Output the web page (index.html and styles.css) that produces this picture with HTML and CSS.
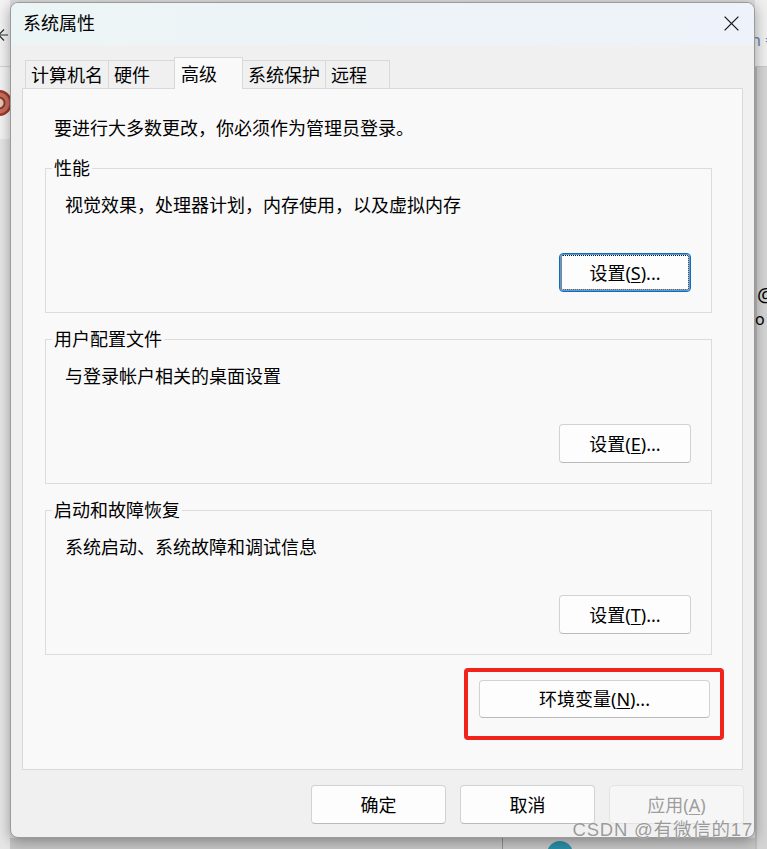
FILE: index.html
```html
<!DOCTYPE html>
<html lang="zh-CN">
<head>
<meta charset="utf-8">
<title>系统属性</title>
<link rel="stylesheet" href="styles.css">
</head>
<body>
<div class="desk">
  <div class="desk-left">
    <div class="dl-top">
      <svg class="dl-back" width="10" height="14" viewBox="0 0 10 14"><path d="M6 1.5 L0.8 7 L6 12.5 M0.8 7 H10" fill="none" stroke="#2b2b2b" stroke-width="1.2"/></svg>
    </div>
    <div class="dl-mid"><span class="avatar"></span></div>
    <div class="dl-rest"></div>
  </div>
  <div class="desk-center">
    <div class="dc-fill"></div>
    <div class="dc-bottom"><span class="dc-split"></span><span class="teal"></span></div>
  </div>
  <div class="desk-right">
    <div class="dr-top"><span class="dr-n">n =</span></div>
    <div class="dr-rest"><span class="dr-at">@</span><span class="dr-o">o</span></div>
  </div>
</div>

<div class="dialog">
  <div class="titlebar">
    <span class="title">系统属性</span>
    <svg class="close" width="15" height="15" viewBox="0 0 15 15"><path d="M0.6 0.6 L14.4 14.4 M14.4 0.6 L0.6 14.4" fill="none" stroke="#1c1c1c" stroke-width="1.3"/></svg>
  </div>

  <div class="tabs">
    <div class="tab first">计算机名</div>
    <div class="tab">硬件</div>
    <div class="tab active">高级</div>
    <div class="tab">系统保护</div>
    <div class="tab last">远程</div>
  </div>

  <div class="panel">
    <p class="intro">要进行大多数更改，你必须作为管理员登录。</p>

    <fieldset class="group">
      <legend>性能</legend>
      <div class="group-body">
        <p class="desc">视觉效果，处理器计划，内存使用，以及虚拟内存</p>
        <div class="btn-row"><button class="btn focus">设置(<u>S</u>)...</button></div>
      </div>
    </fieldset>

    <fieldset class="group">
      <legend>用户配置文件</legend>
      <div class="group-body">
        <p class="desc">与登录帐户相关的桌面设置</p>
        <div class="btn-row"><button class="btn">设置(<u>E</u>)...</button></div>
      </div>
    </fieldset>

    <fieldset class="group">
      <legend>启动和故障恢复</legend>
      <div class="group-body">
        <p class="desc">系统启动、系统故障和调试信息</p>
        <div class="btn-row"><button class="btn">设置(<u>T</u>)...</button></div>
      </div>
    </fieldset>

    <div class="env-row">
      <div class="annot"><button class="btn wide">环境变量(<u>N</u>)...</button></div>
    </div>
  </div>

  <div class="footer">
    <button class="btn foot">确定</button>
    <button class="btn foot">取消</button>
    <button class="btn foot disabled">应用(<u>A</u>)</button>
  </div>
</div>

<div class="watermark">CSDN @有微信的17</div>
</body>
</html>
```

FILE: styles.css
```css
html, body {
  margin: 0;
  padding: 0;
}

body {
  width: 767px;
  height: 849px;
  overflow: hidden;
  position: relative;
  font-family: "Noto Sans", "Noto Sans CJK SC", sans-serif;
  color: #000;
}

/* ---------- desktop behind the dialog ---------- */
.desk {
  display: grid;
  grid-template-columns: 10px 1fr 12px;
  height: 849px;
  background: #d2d2d2;
}

.desk-left {
  display: flex;
  flex-direction: column;
  overflow: hidden;
}

.dl-top {
  height: 67px;
  background: #f3f3f3;
  border-bottom: 1px solid #d4d4d4;
  display: flex;
  align-items: flex-start;
  padding-top: 28px;
  box-sizing: border-box;
}

.dl-back {
  margin-left: -2px;
}

.dl-mid {
  height: 72px;
  background: #f4f4f4;
  display: flex;
  align-items: center;
}

.avatar {
  width: 26px;
  height: 26px;
  margin-left: -14px;
  border-radius: 50%;
  background: radial-gradient(circle at 50% 50%, #e9c6b8 0 4px, #8b3b2c 5px 6px, #c9705e 7px 10px, #9d3a2c 11px);
  flex: none;
}

.dl-rest {
  flex: 1;
  background: #e6e6e6;
}

.desk-center {
  display: flex;
  flex-direction: column;
}

.dc-fill {
  flex: 1;
  background: #dedede;
}

.dc-bottom {
  height: 11px;
  background: #c6c6c6;
  display: flex;
  align-items: flex-start;
}

.dc-split {
  width: 1px;
  height: 11px;
  margin-left: 492px;
  background: #8f8f8f;
}

.teal {
  width: 26px;
  height: 26px;
  margin: 3px 0 0 44px;
  border-radius: 50%;
  background: #2a8fa6;
}

.desk-right {
  display: flex;
  flex-direction: column;
  overflow: hidden;
}

.dr-top {
  height: 67px;
  background: #efefef;
  border-bottom: 1px solid #c9c9c9;
  box-sizing: border-box;
  font-size: 16px;
  line-height: 20px;
  padding-top: 30px;
  white-space: nowrap;
}

.dr-n {
  margin-left: -4px;
  color: #6a7fb0;
}

.dr-rest {
  flex: 1;
  background: #d4d4d4;
  border-left: 2px solid #bdbdbd;
  display: flex;
  flex-direction: column;
  font-size: 20px;
  line-height: 24px;
  padding-top: 216px;
  white-space: nowrap;
}

.dr-o {
  margin-left: -2px;
  font-size: 16px;
}

/* ---------- dialog ---------- */
.dialog {
  position: absolute;
  left: 10px;
  top: 2px;
  width: 745px;
  height: 836px;
  box-sizing: border-box;
  border: 1px solid #9a9a9a;
  border-radius: 8px;
  background: #f0f0f0;
  box-shadow: 0 3px 14px rgba(0, 0, 0, 0.35);
  display: flex;
  flex-direction: column;
  overflow: hidden;
}

.titlebar {
  flex: none;
  height: 42px;
  box-sizing: border-box;
  padding: 0 15px 3px 12px;
  display: flex;
  align-items: center;
  background: linear-gradient(90deg, #ecf5f6, #eef2fa);
}

.title {
  flex: 1;
  font-size: 18px;
  line-height: 24px;
}

.close {
  flex: none;
  margin-top: 2px;
}

/* tabs */
.tabs {
  flex: none;
  height: 31px;
  margin: 12px 0 0 14px;
  display: flex;
  align-items: flex-end;
}

.tab {
  box-sizing: border-box;
  height: 28px;
  min-width: 67px;
  padding: 0 5px;
  margin-left: -1px;
  border: 1px solid #d9d9d9;
  border-bottom: none;
  background: #f0f0f0;
  font-size: 18px;
  line-height: 24px;
  display: flex;
  align-items: center;
  white-space: nowrap;
}

.tab.first {
  margin-left: 0;
}

.tab.last {
  min-width: 65px;
}

.tab.active {
  height: 32px;
  min-width: 69px;
  padding-left: 6px;
  margin-bottom: -1px;
  background: #f9f9f9;
  position: relative;
  z-index: 1;
}

/* panel */
.panel {
  flex: 1;
  min-height: 0;
  margin: 0 11px;
  border: 1px solid #d9d9d9;
  background: #f9f9f9;
  padding: 27px 30px 0 22px;
}

.intro {
  margin: 0 0 16px 9px;
  font-size: 18px;
  line-height: 24px;
}

.group {
  margin: 0 0 14px;
  padding: 0;
  min-width: 0;
  border: 1px solid #dcdcdc;
}

.group legend {
  margin-left: 6px;
  padding: 0 2px;
  font-size: 18px;
  line-height: 24px;
}

.group-body {
  padding: 13px 20px 20px 19px;
}

.desc {
  margin: 0;
  font-size: 18px;
  line-height: 24px;
}

.btn-row {
  display: flex;
  justify-content: flex-end;
  margin-top: 36px;
}

.btn {
  box-sizing: border-box;
  width: 132px;
  height: 39px;
  margin: 0;
  padding: 0;
  border: 1px solid #d2d2d2;
  border-bottom-color: #bababa;
  border-radius: 4px;
  background: #fdfdfd;
  font-family: "Noto Sans", "Noto Sans CJK SC", sans-serif;
  font-size: 18px;
  line-height: 24px;
  color: #000;
  display: flex;
  align-items: center;
  justify-content: center;
  white-space: nowrap;
}

.btn u {
  text-underline-offset: 2px;
}

.btn.focus {
  border: 1px solid #0b6cc4;
  box-shadow: inset 0 0 0 1px #5a9ad8;
  outline: 1px dotted #111;
  outline-offset: -3px;
}

.env-row {
  display: flex;
  justify-content: flex-end;
  margin: -1px -12px 0 0;
}

.annot {
  border: 4px solid #f2231d;
  border-radius: 4px;
  padding: 8px 10px 18px 11px;
}

.btn.wide {
  width: 231px;
  height: 38px;
}

/* footer */
.footer {
  flex: none;
  display: flex;
  justify-content: flex-end;
  gap: 14px;
  padding: 15px 10px 13px 0;
}

.btn.foot {
  width: 135px;
  height: 39px;
}

.btn.disabled {
  color: #9e9e9e;
  background: #f6f6f6;
  border-color: #e3e3e3;
}

/* watermark */
.watermark {
  position: absolute;
  right: 14px;
  top: 818px;
  font-family: "Liberation Sans", "Noto Sans CJK SC", sans-serif;
  font-size: 18.5px;
  line-height: 24px;
  letter-spacing: 0.8px;
  color: rgba(140, 140, 140, 0.9);
  text-shadow: 0 0 1px #fff;
  white-space: nowrap;
}
```
